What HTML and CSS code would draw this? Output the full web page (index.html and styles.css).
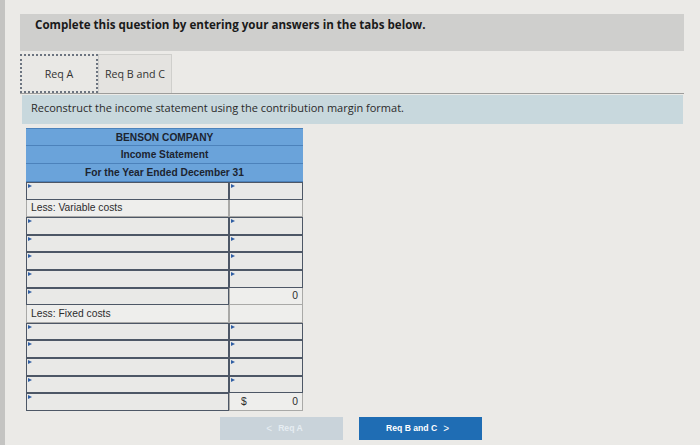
FILE: index.html
```html
<!DOCTYPE html>
<html>
<head>
<meta charset="utf-8">
<link rel="stylesheet" href="styles.css">
</head>
<body>
<div class="screen">
  <div class="edge"></div>
  <div class="main">
    <div class="banner">Complete this question by entering your answers in the tabs below.</div>
    <div class="tabs">
      <div class="tab active">Req A</div>
      <div class="tab">Req B and C</div>
    </div>
    <div class="instr">Reconstruct the income statement using the contribution margin format.</div>
    <div class="stmt">
      <div class="hd">BENSON COMPANY</div>
      <div class="hd">Income Statement</div>
      <div class="hd">For the Year Ended December 31</div>

      <div class="in"></div><div class="in"></div>
      <div class="pl lbl">Less: Variable costs</div><div class="pl"></div>
      <div class="in"></div><div class="in"></div>
      <div class="in"></div><div class="in"></div>
      <div class="in"></div><div class="in"></div>
      <div class="in"></div><div class="in"></div>
      <div class="in"></div><div class="pl num">0</div>
      <div class="pl lbl">Less: Fixed costs</div><div class="pl"></div>
      <div class="in"></div><div class="in"></div>
      <div class="in"></div><div class="in"></div>
      <div class="in"></div><div class="in"></div>
      <div class="in"></div><div class="in"></div>
      <div class="in"></div><div class="pl num total"><span>$</span><span>0</span></div>
    </div>
    <div class="nav">
      <div class="btn prev"><span class="chev">&lt;</span> Req A</div>
      <div class="btn next">Req B and C <span class="chev">&gt;</span></div>
    </div>
  </div>
</div>
</body>
</html>
```

FILE: styles.css
```css
html, body {
  margin: 0;
  padding: 0;
}
body {
  width: 700px;
  height: 445px;
  overflow: hidden;
  background: #ebeae7;
  font-family: "Open Sans", "Liberation Sans", sans-serif;
  color: #222;
}
.screen {
  display: flex;
  height: 445px;
}
.edge {
  width: 5px;
  background: #c4c4c2;
  flex: none;
}
.main {
  margin-left: 15px;
  padding-top: 14px;
  width: 664px;
}
.banner {
  height: 37px;
  box-sizing: border-box;
  background: #cfcfcd;
  padding: 3px 0 0 15px;
  font-size: 11.6px;
  font-weight: 700;
  color: #1a1a1a;
}
.tabs {
  display: flex;
  margin-top: 3px;
  height: 39px;
  border-bottom: 1px solid #9d9d9b;
}
.tab {
  box-sizing: border-box;
  height: 39px;
  display: flex;
  align-items: center;
  justify-content: center;
  font-size: 10.7px;
  color: #333;
  background: #e4e3e0;
  border: 1px solid #cfcfcc;
  border-bottom: none;
}
.tab.active {
  width: 78px;
  border: 2px dotted #6c7480;
  background: #e9e8e5;
}
.tab:not(.active) {
  width: 74px;
}
.instr {
  margin: 1px 1px 0 2px;
  height: 29px;
  box-sizing: border-box;
  background: #c8d8dd;
  padding: 5px 0 0 9px;
  font-size: 11px;
  color: #2a2a2a;
}
.stmt {
  margin: 4px 0 0 6px;
  width: 277px;
  display: grid;
  grid-template-columns: 203px 74px;
  grid-template-rows: repeat(3, 18px);
  grid-auto-rows: 17.6px;
  font-family: "Liberation Sans", Arial, sans-serif;
  font-size: 10.3px;
  color: #2c2c2c;
}
.hd {
  grid-column: 1 / 3;
  background: #6aa3da;
  border-bottom: 1px solid #4c82bb;
  display: flex;
  align-items: center;
  justify-content: center;
  font-weight: 700;
  color: #1c2430;
  font-size: 10.2px;
}
.hd:first-child {
  border-top: 1px solid #4c82bb;
}
.in {
  position: relative;
  box-sizing: border-box;
  border: 1px solid #4d5766;
  background: #e9e9e7;
}
.in::before {
  content: "";
  position: absolute;
  top: 1px;
  left: 1px;
  border-left: 4px solid #2f5ea3;
  border-top: 2.5px solid transparent;
  border-bottom: 2.5px solid transparent;
}
.pl {
  box-sizing: border-box;
  border: 1px solid #a9a9a7;
  border-top: none;
  background: #eeeeec;
  display: flex;
  align-items: center;
}
.lbl {
  padding-left: 4px;
}
.num {
  justify-content: flex-end;
  padding-right: 4px;
}
.total {
  justify-content: space-between;
  padding-left: 11px;
}
.nav {
  display: flex;
  gap: 16px;
  margin: 6px 0 0 200px;
}
.btn {
  width: 123px;
  height: 23px;
  display: flex;
  align-items: center;
  justify-content: center;
  font-family: "Liberation Sans", Arial, sans-serif;
  font-size: 8.6px;
  font-weight: 700;
}
.prev {
  background: #c9d3da;
  color: #e6edf2;
}
.next {
  background: #1f6db4;
  color: #ffffff;
}
.chev {
  font-weight: 400;
  font-size: 10px;
  margin: 0 6px;
}
```
